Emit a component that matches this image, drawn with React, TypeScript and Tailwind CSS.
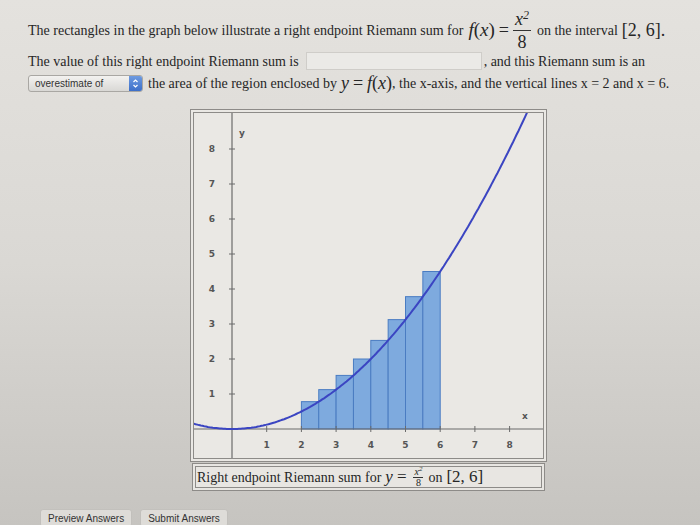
import React from 'react';

const W = 349;
const H = 345;
const OX = 38;
const OY = 316;
const UX = 34.7;
const UY = 35;

const px = (x: number) => OX + x * UX;
const py = (y: number) => OY - y * UY;

const Chart: React.FC = () => {
  const rects = Array.from({ length: 8 }, (_, i) => {
    const x0 = 2 + 0.5 * i;
    const h = (x0 + 0.5) ** 2 / 8;
    return { x0, h };
  });

  const pts: string[] = [];
  for (let x = -1.15; x <= 8.56; x += 0.05) {
    pts.push(`${px(x).toFixed(1)},${py((x * x) / 8).toFixed(1)}`);
  }

  return (
    <svg width={W} height={H} viewBox={`0 0 ${W} ${H}`} className="block">
      {rects.map((r) => (
        <rect
          key={r.x0}
          x={px(r.x0)}
          y={py(r.h)}
          width={0.5 * UX}
          height={r.h * UY}
          fill="#7eaade"
          stroke="#4a7cc2"
          strokeWidth={1}
        />
      ))}
      <line x1={0} y1={OY} x2={W} y2={OY} stroke="#6b6b6b" strokeWidth={1.2} />
      <line x1={OX} y1={0} x2={OX} y2={H} stroke="#6b6b6b" strokeWidth={1.2} />
      {[1, 2, 3, 4, 5, 6, 7, 8].map((k) => (
        <g key={k}>
          <line x1={px(k)} y1={OY - 3} x2={px(k)} y2={OY + 3} stroke="#6b6b6b" />
          <line x1={OX - 3} y1={py(k)} x2={OX + 3} y2={py(k)} stroke="#6b6b6b" />
          <text
            x={px(k)}
            y={OY + 19}
            textAnchor="middle"
            fontFamily="DejaVu Sans, sans-serif"
            fontWeight="bold"
            fontSize={9}
            fill="#555"
          >
            {k}
          </text>
          <text
            x={18}
            y={py(k) + 3}
            textAnchor="middle"
            fontFamily="DejaVu Sans, sans-serif"
            fontWeight="bold"
            fontSize={9}
            fill="#555"
          >
            {k}
          </text>
        </g>
      ))}
      <text x={45} y={23} fontFamily="DejaVu Sans, sans-serif" fontWeight="bold" fontSize={9} fill="#555">
        y
      </text>
      <text x={328} y={306} fontFamily="DejaVu Sans, sans-serif" fontWeight="bold" fontSize={9} fill="#555">
        x
      </text>
      <polyline points={pts.join(' ')} fill="none" stroke="#3b45c2" strokeWidth={2} />
    </svg>
  );
};

const Frac: React.FC<{ small?: boolean }> = ({ small }) => (
  <span className={`inline-flex flex-col items-center leading-none ${small ? 'text-[10px] mx-[3px]' : 'text-[18px] mx-[4px]'}`}>
    <span className={`italic border-b border-[#333] ${small ? 'px-[1px]' : 'px-[2px] pb-[2px]'}`}>
      x<sup className={small ? 'text-[7px]' : 'text-[12px]'}>2</sup>
    </span>
    <span className={small ? '' : 'pt-[2px]'}>8</span>
  </span>
);

const Stepper: React.FC = () => (
  <span className="flex items-center justify-center w-[13px] h-full bg-gradient-to-b from-[#6e9be0] to-[#3d6fc9]">
    <svg width="7" height="11" viewBox="0 0 7 11">
      <path d="M1.5 4 L3.5 2 L5.5 4" fill="none" stroke="#fff" strokeWidth="1.2" />
      <path d="M1.5 7 L3.5 9 L5.5 7" fill="none" stroke="#fff" strokeWidth="1.2" />
    </svg>
  </span>
);

export default function App() {
  return (
    <div
      className="w-[700px] h-[525px] overflow-hidden bg-gradient-to-b from-[#e4e2de] via-[#dad8d4] to-[#c6c4c0] text-[#262626] pl-[28px]"
      style={{ fontFamily: '"Liberation Serif", "Times New Roman", serif' }}
    >
      {/* line 1 */}
      <div className="flex items-center h-[40px] mt-[10px] text-[14px] whitespace-nowrap">
        <span>The rectangles in the graph below illustrate a right endpoint Riemann sum for</span>
        <span className="text-[19px] italic ml-[5px]">f</span>
        <span className="text-[19px]">(</span>
        <span className="text-[19px] italic">x</span>
        <span className="text-[19px]">)</span>
        <span className="text-[18px] ml-[4px]">=</span>
        <Frac />
        <span className="ml-[2px]">on the interval</span>
        <span className="text-[18px] ml-[4px]">[2, 6].</span>
      </div>

      {/* line 2 */}
      <div className="flex items-center h-[22px] text-[14px] whitespace-nowrap">
        <span>The value of this right endpoint Riemann sum is</span>
        <span className="ml-[7px] w-[176px] h-[18px] bg-[#ebeae7] border border-[#cfcdc9]" />
        <span className="ml-[2px]">, and this Riemann sum is an</span>
      </div>

      {/* line 3 */}
      <div className="flex items-center h-[22px] text-[14px] whitespace-nowrap">
        <div className="flex items-center w-[115px] h-[17px] rounded-[3px] border border-[#a9a7a3] bg-gradient-to-b from-[#f3f2f0] to-[#d9d8d5] overflow-hidden">
          <span
            className="flex-1 pl-[6px] text-[10px] text-[#333]"
            style={{ fontFamily: '"Liberation Sans", Arial, sans-serif' }}
          >
            overestimate of
          </span>
          <Stepper />
        </div>
        <span className="ml-[5px]">the area of the region enclosed by</span>
        <span className="text-[18px] italic ml-[4px]">y</span>
        <span className="text-[18px] mx-[4px]">=</span>
        <span className="text-[18px] italic">f</span>
        <span className="text-[18px]">(</span>
        <span className="text-[18px] italic">x</span>
        <span className="text-[18px]">)</span>
        <span>, the x-axis, and the vertical lines x = 2 and x = 6.</span>
      </div>

      {/* graph */}
      <div className="ml-[162px] mt-[15px] w-[357px]">
        <div className="border-[4px] border-double border-[#8d8b88] bg-[#eae8e4]">
          <Chart />
        </div>
        <div className="mx-[2px] mt-[1px] h-[28px] border-[4px] border-double border-[#8d8b88] bg-[#e8e6e2] flex items-center pl-[1px] text-[14px] whitespace-nowrap">
          <span>Right endpoint Riemann sum for</span>
          <span className="text-[17px] italic ml-[4px]">y</span>
          <span className="text-[17px] mx-[4px]">=</span>
          <Frac small />
          <span className="ml-[2px]">on</span>
          <span className="text-[17px] ml-[4px]">[2, 6]</span>
        </div>
      </div>

      {/* buttons */}
      <div
        className="flex gap-[8px] ml-[12px] mt-[18px] text-[10px] text-[#333]"
        style={{ fontFamily: '"Liberation Sans", Arial, sans-serif' }}
      >
        <button className="h-[18px] px-[7px] rounded-[3px] border border-[#c2c0bc] bg-[#dedcd8]">Preview Answers</button>
        <button className="h-[18px] px-[7px] rounded-[3px] border border-[#c2c0bc] bg-[#dedcd8]">Submit Answers</button>
      </div>
    </div>
  );
}
